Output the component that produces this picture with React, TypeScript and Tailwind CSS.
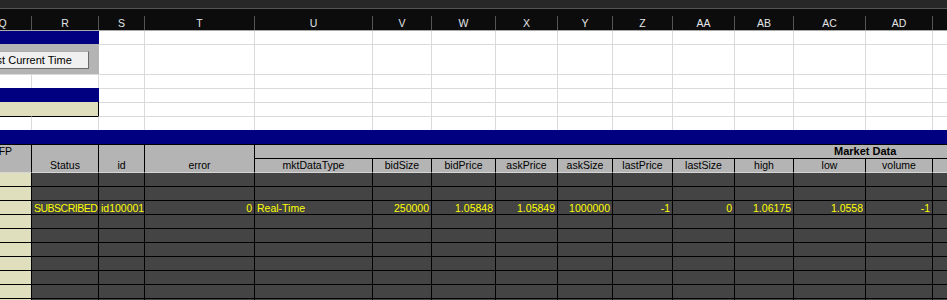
import React from 'react';

type Col = { id: string; w: string };

const COLS: Col[] = [
  { id: 'Q', w: 'w-[58px]' },
  { id: 'R', w: 'w-[67px]' },
  { id: 'S', w: 'w-[46px]' },
  { id: 'T', w: 'w-[110px]' },
  { id: 'U', w: 'w-[118px]' },
  { id: 'V', w: 'w-[59px]' },
  { id: 'W', w: 'w-[64px]' },
  { id: 'X', w: 'w-[62px]' },
  { id: 'Y', w: 'w-[55px]' },
  { id: 'Z', w: 'w-[60px]' },
  { id: 'AA', w: 'w-[62px]' },
  { id: 'AB', w: 'w-[59px]' },
  { id: 'AC', w: 'w-[72px]' },
  { id: 'AD', w: 'w-[67px]' },
  { id: 'AE', w: 'w-[60px]' },
];

const SUB = ['mktDataType', 'bidSize', 'bidPrice', 'askPrice', 'askSize', 'lastPrice', 'lastSize', 'high', 'low', 'volume', ''];

type Val = { t: string; r?: boolean; tight?: boolean };
const DATA: Record<string, Val> = {
  R: { t: 'SUBSCRIBED', tight: true },
  S: { t: 'id100001' },
  T: { t: '0', r: true },
  U: { t: 'Real-Time' },
  V: { t: '250000', r: true },
  W: { t: '1.05848', r: true },
  X: { t: '1.05849', r: true },
  Y: { t: '1000000', r: true },
  Z: { t: '-1', r: true },
  AA: { t: '0', r: true },
  AB: { t: '1.06175', r: true },
  AC: { t: '1.0558', r: true },
  AD: { t: '-1', r: true },
};

function Cells({ cols, cls }: { cols: Col[]; cls: string }) {
  return (
    <>
      {cols.map((c) => (
        <div key={c.id} className={`${c.w} shrink-0 ${cls}`} />
      ))}
    </>
  );
}

export default function App() {
  const rest = COLS.slice(2);
  const market = COLS.slice(4);
  return (
    <div className="w-[947px] h-[300px] overflow-hidden bg-white font-['Liberation_Sans',Arial,sans-serif] text-[10.5px] text-black">
      <div className="h-[9px] bg-[#272727] border-b border-[#555555]" />
      <div className="ml-[-26px] w-[1019px]">
        {/* column letters */}
        <div className="bg-[#0c0c0c] pt-[7px] border-b border-[#a9a9a9]">
          <div className="flex h-[14px]">
            {COLS.map((c) => (
              <div
                key={c.id}
                className={`${c.w} shrink-0 border-r border-[#555555] text-center leading-[14px] text-[#e2e6ea]`}
              >
                {c.id}
              </div>
            ))}
          </div>
        </div>

        {/* row 1 */}
        <div className="flex h-[13px]">
          <div className="w-[125px] shrink-0 bg-[#000080]" />
          <Cells cols={rest} cls="border-r border-[#dadada]" />
        </div>
        {/* row 2 */}
        <div className="flex h-[30px]">
          <div className="w-[125px] shrink-0 bg-[#b4b4b4] flex justify-end items-start pt-[7px] pr-[10px]">
            <div className="w-[142px] h-[18px] shrink-0 bg-[#f0f0f0] border border-[#adadad] border-r-[#6a6a6a] border-b-[#6a6a6a] text-center text-[11px] leading-[16px] whitespace-nowrap">
              Request Current Time
            </div>
          </div>
          <Cells cols={rest} cls="border-t border-r border-[#dadada]" />
        </div>
        {/* row 3 */}
        <div className="flex h-[14px]">
          <Cells cols={COLS} cls="border-t border-r border-[#dadada]" />
        </div>
        {/* row 4 */}
        <div className="flex h-[14px]">
          <div className="w-[125px] shrink-0 bg-[#000080]" />
          <Cells cols={rest} cls="border-t border-r border-[#dadada]" />
        </div>
        {/* row 5 */}
        <div className="flex h-[14px]">
          <div className="w-[125px] shrink-0 bg-[#e0dfbd] border-r border-black" />
          <Cells cols={rest} cls="border-t border-r border-[#dadada]" />
        </div>
        {/* row 6 */}
        <div className="flex h-[14px]">
          <Cells cols={COLS.slice(0, 2)} cls="border-t border-r border-t-black border-r-[#dadada]" />
          <Cells cols={rest} cls="border-t border-r border-[#dadada]" />
        </div>
        {/* row 7 navy band */}
        <div className="h-[14px] bg-[#000080]" />

        {/* table header */}
        <div className="flex h-[28px]">
          <div className="w-[58px] shrink-0 bg-[#b4b4b4] border-t border-r border-black text-center leading-[13px]">
            LFP
          </div>
          {[
            { c: COLS[1], t: 'Status' },
            { c: COLS[2], t: 'id' },
            { c: COLS[3], t: 'error' },
          ].map(({ c, t }) => (
            <div
              key={c.id}
              className={`${c.w} shrink-0 bg-[#b4b4b4] border-t border-r border-black flex items-end justify-center leading-[13px]`}
            >
              {t}
            </div>
          ))}
          <div className="w-[738px] shrink-0 flex flex-col">
            <div className="h-[14px] bg-[#b4b4b4] border-t border-black pl-[579px] font-bold text-[11px] leading-[13px] whitespace-nowrap">
              Market Data
            </div>
            <div className="flex h-[14px]">
              {market.map((c, i) => (
                <div
                  key={c.id}
                  className={`${c.w} shrink-0 bg-[#b4b4b4] border-t border-r border-black text-center leading-[13px] whitespace-nowrap overflow-hidden`}
                >
                  {SUB[i]}
                </div>
              ))}
            </div>
          </div>
        </div>

        {/* data rows */}
        {Array.from({ length: 10 }).map((_, ri) => (
          <div key={ri} className="flex h-[14px]">
            {COLS.map((c) => {
              const top = ri === 0 ? 'border-t-[#d6d6d6]' : 'border-t-black';
              if (c.id === 'Q') {
                return (
                  <div
                    key={c.id}
                    className={`${c.w} shrink-0 bg-[#e0dfbd] border-t border-r border-r-black ${top}`}
                  />
                );
              }
              const v = ri === 2 ? DATA[c.id] : undefined;
              return (
                <div
                  key={c.id}
                  className={`${c.w} shrink-0 bg-[#444444] border-t border-r border-r-black ${top} px-[2px] pt-px leading-[12px] text-[#ffff00] whitespace-nowrap overflow-hidden ${
                    v && v.r ? 'text-right' : 'text-left'
                  } ${v && v.tight ? 'tracking-[-0.5px]' : ''}`}
                >
                  {v ? v.t : ''}
                </div>
              );
            })}
          </div>
        ))}
      </div>
    </div>
  );
}
